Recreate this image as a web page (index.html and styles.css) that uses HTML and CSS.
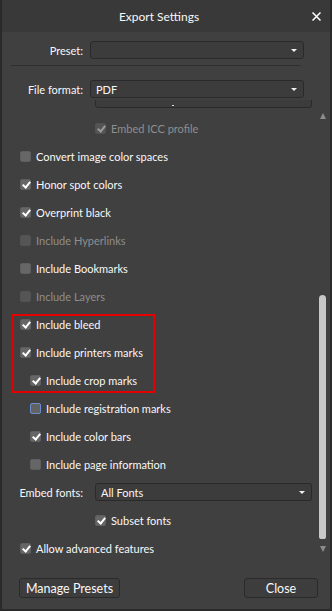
FILE: index.html
```html
<!DOCTYPE html>
<html>
<head>
<meta charset="utf-8">
<link rel="stylesheet" href="styles.css">
</head>
<body>
<div class="dialog">
  <div class="titlebar">
    <span></span>
    <span class="title">Export Settings</span>
    <span class="close">
      <svg width="9" height="9" viewBox="0 0 9 9"><path d="M0.5 0.5 L8.5 8.5 M8.5 0.5 L0.5 8.5" stroke="#ffffff" stroke-width="1.5" fill="none"/></svg>
    </span>
  </div>
  <div class="content">
    <div class="field">
      <label class="lbl">Preset:</label>
      <div class="select top"><span></span><i class="caret"></i></div>
    </div>
    <div class="sep"></div>
    <div class="field ff">
      <label class="lbl">File format:</label>
      <div class="select top"><span>PDF</span><i class="caret"></i></div>
    </div>
    <div class="scroll">
      <div class="scroll-inner">
        <div class="select clipped"><span class="dot"></span></div>
        <div class="row deep disabled"><span class="cb checked"></span><span class="txt">Embed ICC profile</span></div>
        <div class="row"><span class="cb"></span><span class="txt">Convert image color spaces</span></div>
        <div class="row"><span class="cb checked"></span><span class="txt">Honor spot colors</span></div>
        <div class="row"><span class="cb checked"></span><span class="txt">Overprint black</span></div>
        <div class="row disabled"><span class="cb"></span><span class="txt">Include Hyperlinks</span></div>
        <div class="row"><span class="cb"></span><span class="txt">Include Bookmarks</span></div>
        <div class="row disabled"><span class="cb"></span><span class="txt">Include Layers</span></div>
        <div class="row"><span class="cb checked"></span><span class="txt">Include bleed</span></div>
        <div class="row"><span class="cb checked"></span><span class="txt">Include printers marks</span></div>
        <div class="row sub"><span class="cb checked"></span><span class="txt">Include crop marks</span></div>
        <div class="row sub"><span class="cb focus"></span><span class="txt">Include registration marks</span></div>
        <div class="row sub"><span class="cb checked"></span><span class="txt">Include color bars</span></div>
        <div class="row sub"><span class="cb"></span><span class="txt">Include page information</span></div>
        <div class="row field-row">
          <label class="lbl">Embed fonts:</label>
          <div class="select wide"><span>All Fonts</span><i class="caret"></i></div>
        </div>
        <div class="row deep"><span class="cb checked"></span><span class="txt">Subset fonts</span></div>
        <div class="row"><span class="cb checked"></span><span class="txt">Allow advanced features</span></div>
      </div>
      <div class="scrollbar">
        <i class="arrow up"></i>
        <div class="thumb"></div>
        <i class="arrow down"></i>
      </div>
    </div>
    <div class="buttons">
      <button class="btn manage">Manage Presets</button>
      <button class="btn closebtn">Close</button>
    </div>
  </div>
  <div class="highlight"></div>
</div>
</body>
</html>
```
FILE: styles.css
```css
html, body {
  margin: 0;
  padding: 0;
}
body {
  width: 332px;
  height: 611px;
  overflow: hidden;
  background: #2a2a2a;
  font-family: Lato, "Liberation Sans", sans-serif;
  font-size: 11px;
  color: #f8f8f8;
}
.dialog {
  position: relative;
  margin-left: 2px;
  width: 328px;
  height: 609px;
  background: #404040;
  display: flex;
  flex-direction: column;
}
.titlebar {
  height: 32px;
  background: #393939;
  display: grid;
  grid-template-columns: 1fr auto 1fr;
  align-items: center;
}
.title {
  font-size: 12px;
  color: #f8f8f8;
  margin-right: 14px;
}
.close {
  justify-self: end;
  padding-right: 9px;
  display: flex;
  margin-top: 1px;
}
.content {
  padding-top: 9px;
  display: flex;
  flex-direction: column;
}
.field {
  display: flex;
  align-items: center;
  height: 18px;
}
.lbl {
  width: 81px;
  text-align: right;
  flex: none;
}
.select {
  box-sizing: border-box;
  border: 1px solid #2a2a2a;
  border-radius: 3px;
  background: #3c3c3c;
  display: flex;
  align-items: center;
  justify-content: space-between;
  padding: 0 6px 0 5px;
  height: 18px;
}
.select.top {
  margin-left: 7px;
  width: 214px;
}
.caret {
  width: 0;
  height: 0;
  border-left: 3px solid transparent;
  border-right: 3px solid transparent;
  border-top: 3px solid #f0f0f0;
}
.sep {
  margin: 6px 0 0 9px;
  width: 289px;
  height: 1px;
  background: #2e2e2e;
}
.ff {
  margin-top: 14px;
}
.scroll {
  margin-top: 2px;
  height: 460px;
  position: relative;
  overflow: hidden;
}
.scroll-inner {
  display: flex;
  flex-direction: column;
}
.select.clipped {
  margin: -10px 0 6px 93px;
  width: 217px;
  justify-content: center;
}
.dot {
  width: 2px;
  height: 1px;
  background: #e0e0e0;
  margin-top: 13px;
  margin-left: -60px;
}
.row {
  height: 28px;
  display: flex;
  align-items: center;
  padding-left: 18px;
}
.row.sub {
  padding-left: 28px;
}
.row.deep {
  padding-left: 93px;
}
.row.field-row {
  padding-left: 0;
}
.select.wide {
  margin-left: 12px;
  width: 217px;
}
.cb {
  position: relative;
  box-sizing: border-box;
  width: 11px;
  height: 11px;
  border-radius: 2px;
  background: #666666;
  border: 1px solid #5e5e5e;
  flex: none;
}
.cb.checked::after {
  content: "";
  position: absolute;
  left: 3px;
  top: 0px;
  width: 3px;
  height: 6px;
  border-right: 2px solid #ffffff;
  border-bottom: 2px solid #ffffff;
  transform: rotate(40deg);
}
.cb.focus {
  border-color: #6b8fcb;
  background: #626262;
}
.txt {
  margin-left: 5px;
  white-space: nowrap;
}
.row.disabled .txt {
  color: #8e8e8e;
}
.row.disabled .cb {
  background: #555555;
  border-color: #525252;
}
.row.disabled .cb.checked::after {
  border-color: #9a9a9a;
}
.scrollbar {
  position: absolute;
  top: 0;
  right: 2px;
  width: 11px;
  height: 460px;
  display: flex;
  flex-direction: column;
  align-items: center;
}
.arrow {
  width: 0;
  height: 0;
  border-left: 3.5px solid transparent;
  border-right: 3.5px solid transparent;
}
.arrow.up {
  margin-top: 13px;
  border-bottom: 6px solid #8c8c8c;
}
.arrow.down {
  margin-top: 7px;
  border-top: 6px solid #8c8c8c;
}
.thumb {
  margin-top: 176px;
  width: 7px;
  height: 244px;
  border-radius: 4px 4px 3px 3px;
  background: #c8c8c8;
}
.buttons {
  margin-top: 18px;
  display: flex;
  justify-content: space-between;
  padding: 0 12px 0 17px;
}
.btn {
  box-sizing: border-box;
  height: 20px;
  border: 1px solid #2b2b2b;
  border-radius: 3px;
  background: #3d3d3d;
  color: #f8f8f8;
  font-family: Lato, "Liberation Sans", sans-serif;
  font-size: 12.5px;
  padding: 0;
}
.manage {
  width: 101px;
}
.closebtn {
  width: 74px;
}
.highlight {
  position: absolute;
  left: 10px;
  top: 314px;
  width: 143px;
  height: 79px;
  box-sizing: border-box;
  border: 2px solid #e40000;
}
```
